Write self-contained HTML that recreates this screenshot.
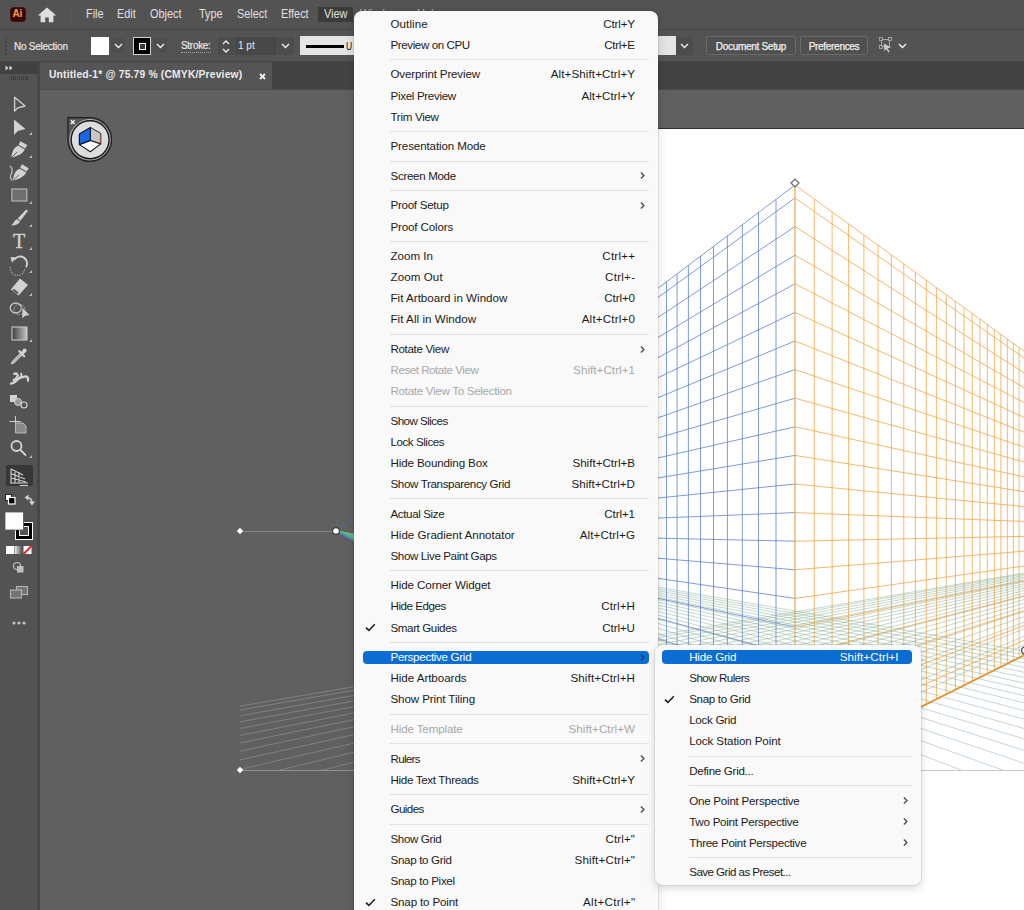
<!DOCTYPE html>
<html><head><meta charset="utf-8"><title>Illustrator</title>
<style>
*{margin:0;padding:0;box-sizing:border-box}
html,body{width:1024px;height:910px;overflow:hidden;background:#606060}
body{font-family:"Liberation Sans",sans-serif;position:relative;color:#e2e2e2}
.abs{position:absolute}
#menubar{position:absolute;left:0;top:0;width:1024px;height:29px;background:#535353}
#ctrl{position:absolute;left:0;top:29px;width:1024px;height:33px;background:#535353;border-top:1px solid #474747;border-bottom:1px solid #454545}
#tabbar{position:absolute;left:40px;top:62px;width:984px;height:27px;background:#434343}
#tab{position:absolute;left:0px;top:0;width:232px;height:27px;background:#555555}
#tools{position:absolute;left:0;top:62px;width:40px;height:848px;background:#535353;border-right:3px solid #474747}
#canvas{position:absolute;left:40px;top:89px;width:985px;height:821px;background:#606060;border-top:1px solid #4a4a4a}
#artboard{position:absolute;left:600px;top:128px;width:424px;height:782px;background:#ffffff;border-top:1px solid #2e2e2e}
.mb{position:absolute;top:6.5px;font-size:12.5px;color:#e0e0e0;white-space:nowrap;transform:scaleX(.87);transform-origin:0 50%}
.menu{position:absolute;background:#f9f9f9;border-radius:8px;box-shadow:0 3px 10px rgba(0,0,0,.16),0 0 0 1px rgba(0,0,0,.07)}
.mi{position:absolute;font-size:11.6px;line-height:20px;height:20px;color:#1b1b1b;white-space:nowrap}
.mi.dis{color:#a8a8a8}
.mi.selt{color:#ffffff}
.sep{position:absolute;height:1px;background:#e1e1e1}
.selbar{position:absolute;height:13.2px;background:#0b6dd2;border-radius:4px}
.cv{position:absolute;line-height:0}
.cv svg{display:block}
</style></head><body>

<div id="canvas"></div>
<div id="artboard"></div>
<svg class="abs" style="left:0;top:0" width="1024" height="910" viewBox="0 0 1024 910">
<defs>
<clipPath id="cf"><rect x="240" y="500" width="800" height="270"/></clipPath>
<clipPath id="ca"><rect x="600" y="129" width="424" height="781"/></clipPath>
<clipPath id="cd"><rect x="240" y="500" width="360" height="270"/></clipPath>
</defs>
<g clip-path="url(#ca)"><path d="M795.0 185.0L600.0 332.0M795.0 198.0L600.0 339.5M795.0 226.6L600.0 355.9M795.0 255.2L600.0 372.4M795.0 283.8L600.0 388.8M795.0 312.4L600.0 405.3M795.0 341.0L600.0 421.7M795.0 369.6L600.0 438.2M795.0 398.2L600.0 454.6M795.0 426.8L600.0 471.1M795.0 455.4L600.0 487.5M795.0 484.0L600.0 504.0M795.0 512.6L600.0 520.4M795.0 541.2L600.0 536.9M795.0 569.8L600.0 553.3M795.0 598.4L600.0 569.8M795.0 627.0L600.0 586.2M795.0 655.6L600.0 602.7M795.0 684.2L600.0 619.1M795.0 712.8L600.0 635.6M795.0 741.4L600.0 652.0M795.0 770.0L600.0 668.5M776.0 199.3L776.0 760.1M758.5 212.5L758.5 751.0M742.3 224.7L742.3 742.6M727.4 236.0L727.4 734.8M713.5 246.5L713.5 727.5M700.5 256.2L700.5 720.8M688.4 265.3L688.4 714.5M677.1 273.9L677.1 708.6M666.5 281.9L666.5 703.1M656.5 289.4L656.5 697.9M647.1 296.5L647.1 693.0M638.3 303.1L638.3 688.4M629.9 309.4L629.9 684.0M622.0 315.4L622.0 679.9M614.5 321.0L614.5 676.0M607.4 326.4L607.4 672.3M600.6 331.5L600.6 668.8" stroke="#5f82d2" stroke-width="1" fill="none" opacity="0.8"/>
<path d="M795.0 185.0L1030.0 355.5M795.0 198.0L1030.0 362.1M795.0 226.6L1030.0 376.6M795.0 255.2L1030.0 391.1M795.0 283.8L1030.0 405.6M795.0 312.4L1030.0 420.1M795.0 341.0L1030.0 434.6M795.0 369.6L1030.0 449.1M795.0 398.2L1030.0 463.6M795.0 426.8L1030.0 478.1M795.0 455.4L1030.0 492.6M795.0 484.0L1030.0 507.2M795.0 512.6L1030.0 521.7M795.0 541.2L1030.0 536.2M795.0 569.8L1030.0 550.7M795.0 598.4L1030.0 565.2M795.0 627.0L1030.0 579.7M795.0 655.6L1030.0 594.2M795.0 684.2L1030.0 608.7M795.0 712.8L1030.0 623.2M795.0 741.4L1030.0 637.7M795.0 770.0L1030.0 652.3M814.3 199.0L814.3 760.3M832.1 211.9L832.1 751.4M848.6 223.9L848.6 743.1M863.9 235.0L863.9 735.5M878.1 245.3L878.1 728.4M891.4 254.9L891.4 721.7M903.8 263.9L903.8 715.5M915.4 272.3L915.4 709.7M926.3 280.2L926.3 704.2M936.6 287.7L936.6 699.1M946.2 294.7L946.2 694.2M955.4 301.3L955.4 689.7M964.0 307.6L964.0 685.3M972.2 313.5L972.2 681.2M979.9 319.1L979.9 677.4M987.3 324.5L987.3 673.7M994.3 329.5L994.3 670.2M1000.9 334.4L1000.9 666.8M1007.3 339.0L1007.3 663.6M1013.3 343.4L1013.3 660.6M1019.1 347.6L1019.1 657.7M1024.6 351.6L1024.6 654.9M1029.9 355.4L1029.9 652.3" stroke="#f2a648" stroke-width="1" fill="none" opacity="0.8"/>
<path d="M795.0 185.0L795.0 770.0" stroke="#eea040" stroke-width="1.1" fill="none"/>
<path d="M795.0 770.0L1030.0 652.3" stroke="#ea9226" stroke-width="1.7" fill="none"/>
<path d="M795.0 770.0L600.0 668.5" stroke="#4d74cc" stroke-width="1.5" fill="none"/></g>
<g clip-path="url(#ca)"><g clip-path="url(#cf)"><path d="M240.0 706.1L1272.0 531.0M240.0 1005.4L1272.0 531.0M240.0 969.3L1272.0 531.0M240.0 938.2L1272.0 531.0M240.0 911.3L1272.0 531.0M240.0 887.7L1272.0 531.0M240.0 866.8L1272.0 531.0M240.0 848.3L1272.0 531.0M240.0 831.7L1272.0 531.0M240.0 816.8L1272.0 531.0M240.0 803.2L1272.0 531.0M240.0 790.9L1272.0 531.0M240.0 779.7L1272.0 531.0M240.0 769.4L1272.0 531.0M240.0 759.9L1272.0 531.0M240.0 751.1L1272.0 531.0M240.0 743.0L1272.0 531.0M240.0 735.5L1272.0 531.0M240.0 728.4L1272.0 531.0M240.0 721.9L1272.0 531.0M240.0 715.8L1272.0 531.0M240.0 710.0L1272.0 531.0M336.0 531.0L1707.0 770.0M336.0 531.0L836.5 770.0M336.0 531.0L878.0 770.0M336.0 531.0L919.5 770.0M336.0 531.0L961.0 770.0M336.0 531.0L1002.5 770.0M336.0 531.0L1044.0 770.0M336.0 531.0L1085.5 770.0M336.0 531.0L1127.0 770.0M336.0 531.0L1168.5 770.0M336.0 531.0L1210.0 770.0M336.0 531.0L1251.5 770.0M336.0 531.0L1293.0 770.0M336.0 531.0L1334.5 770.0M336.0 531.0L1376.0 770.0M336.0 531.0L1417.5 770.0M336.0 531.0L1459.0 770.0M336.0 531.0L1500.5 770.0M336.0 531.0L1542.0 770.0M336.0 531.0L1583.5 770.0M336.0 531.0L1625.0 770.0M336.0 531.0L1666.5 770.0" stroke="#88b092" stroke-width="0.9" fill="none" opacity="0.55"/></g></g>
<g clip-path="url(#cd)"><path d="M240.0 706.1L1272.0 531.0M240.0 1005.4L1272.0 531.0M240.0 969.3L1272.0 531.0M240.0 938.2L1272.0 531.0M240.0 911.3L1272.0 531.0M240.0 887.7L1272.0 531.0M240.0 866.8L1272.0 531.0M240.0 848.3L1272.0 531.0M240.0 831.7L1272.0 531.0M240.0 816.8L1272.0 531.0M240.0 803.2L1272.0 531.0M240.0 790.9L1272.0 531.0M240.0 779.7L1272.0 531.0M240.0 769.4L1272.0 531.0M240.0 759.9L1272.0 531.0M240.0 751.1L1272.0 531.0M240.0 743.0L1272.0 531.0M240.0 735.5L1272.0 531.0M240.0 728.4L1272.0 531.0M240.0 721.9L1272.0 531.0M240.0 715.8L1272.0 531.0M240.0 710.0L1272.0 531.0" stroke="#a4b2a4" stroke-width="1" fill="none" opacity="0.42"/>
<path d="M336.0 531.0L1707.0 770.0M336.0 531.0L836.5 770.0M336.0 531.0L878.0 770.0M336.0 531.0L919.5 770.0M336.0 531.0L961.0 770.0M336.0 531.0L1002.5 770.0M336.0 531.0L1044.0 770.0M336.0 531.0L1085.5 770.0M336.0 531.0L1127.0 770.0M336.0 531.0L1168.5 770.0M336.0 531.0L1210.0 770.0M336.0 531.0L1251.5 770.0M336.0 531.0L1293.0 770.0M336.0 531.0L1334.5 770.0M336.0 531.0L1376.0 770.0M336.0 531.0L1417.5 770.0M336.0 531.0L1459.0 770.0M336.0 531.0L1500.5 770.0M336.0 531.0L1542.0 770.0M336.0 531.0L1583.5 770.0M336.0 531.0L1625.0 770.0M336.0 531.0L1666.5 770.0" stroke="#62b87a" stroke-width="1" fill="none" opacity="0.9"/>
<path d="M336.0 531.0L795.0 770.0" stroke="#4a84d0" stroke-width="1.6" fill="none"/>
<path d="M336.0 531.0L795.0 185M336.0 531.0L795.0 198M336.0 531.0L795.0 226M336.0 531.0L795.0 255M336.0 531.0L795.0 284" stroke="#5a78c8" stroke-width="1" fill="none" opacity="0.16"/>
</g>
<path d="M240 531.5L336 531.5" stroke="#858c85" stroke-width="1"/>
<path d="M240 770.5L600 770.5" stroke="#8f968f" stroke-width="1"/>
<path d="M600 770.5L1024 770.5" stroke="#c4ccc4" stroke-width="1"/>
<path d="M236.8 531L240 527.8L243.2 531L240 534.2Z" fill="#ffffff"/>
<path d="M236.8 770L240 766.8L243.2 770L240 773.2Z" fill="#ffffff"/>
<circle cx="336" cy="531" r="3.4" fill="#ffffff" stroke="#3c3c3c" stroke-width="1.2"/>
<path d="M791.0 183L795.0 179L799.0 183L795.0 187Z" fill="#ffffff" stroke="#6a6a6a" stroke-width="1.2"/>
<circle cx="1025" cy="650.5" r="3.4" fill="#ffffff" stroke="#4a4a4a" stroke-width="1.2"/>
</svg>
<!-- ===== menubar ===== -->
<div id="menubar">
  <div class="abs" style="left:9.5px;top:6.5px;width:16px;height:15px;background:#3a0500;border-radius:3.5px;border:1px solid #4a1208"></div>
  <div class="abs" style="left:12.5px;top:9px;font-size:10px;font-weight:bold;color:#f7a050;letter-spacing:-0.2px;line-height:10px">Ai</div>
  <svg class="abs" style="left:37px;top:7px" width="20" height="16" viewBox="0 0 20 16"><path d="M10 0.5L0.8 8.6H3.6V15.3H8.2V10.4H11.8V15.3H16.4V8.6H19.2Z" fill="#dedede"/></svg>
  <div class="abs" style="left:69.5px;top:5px;width:1px;height:19px;background:#5d5d5d"></div>
  <div class="mb" style="left:85.5px">File</div>
  <div class="mb" style="left:117px">Edit</div>
  <div class="mb" style="left:150px">Object</div>
  <div class="mb" style="left:198.5px">Type</div>
  <div class="mb" style="left:236.5px">Select</div>
  <div class="mb" style="left:280.5px">Effect</div>
  <div class="abs" style="left:318px;top:7px;width:35px;height:15px;background:#3b3b3b"></div>
  <div class="mb" style="left:323.5px">View</div>
  <div class="mb" style="left:360px;color:#bdbdbd">Window</div>
  <div class="mb" style="left:417px;color:#bdbdbd">Help</div>
</div>

<!-- ===== control bar ===== -->
<div id="ctrl">
  <div class="abs" style="left:5px;top:7px;width:2px;height:18px;border-left:2px dotted #474747"></div>
  <div class="abs" style="left:14px;top:11px;font-size:10px;color:#e6e6e6;letter-spacing:-0.25px;-webkit-text-stroke:0.2px #e6e6e6">No Selection</div>
  <div class="abs" style="left:91px;top:7px;width:18px;height:18px;background:#ffffff"></div>
  <div class="abs" style="left:111px;top:8px;width:14px;height:15px;background:#4e4e4e;border-radius:2px"></div>
  <svg class="abs" style="left:114px;top:13px" width="9" height="6" viewBox="0 0 9 6"><path d="M1 1L4.5 4.5L8 1" fill="none" stroke="#f0f0f0" stroke-width="1.4"/></svg>
  <div class="abs" style="left:133px;top:7px;width:18px;height:18px;background:#000000;border:1px solid #d0d0d0"></div>
  <div class="abs" style="left:139px;top:13px;width:7px;height:7px;border:1.5px solid #ffffff;background:#3a3a3a"></div>
  <div class="abs" style="left:153px;top:8px;width:14px;height:15px;background:#4e4e4e;border-radius:2px"></div>
  <svg class="abs" style="left:156px;top:13px" width="9" height="6" viewBox="0 0 9 6"><path d="M1 1L4.5 4.5L8 1" fill="none" stroke="#f0f0f0" stroke-width="1.4"/></svg>
  <div class="abs" style="left:181px;top:10px;font-size:10px;color:#e6e6e6;letter-spacing:-0.3px;border-bottom:1px dotted #a0a0a0;line-height:12px;-webkit-text-stroke:0.2px #e6e6e6">Stroke:</div>
  <div class="abs" style="left:218px;top:7px;width:16px;height:18px;background:#4c4c4c"></div>
  <svg class="abs" style="left:222px;top:9px" width="8" height="15" viewBox="0 0 8 15"><path d="M1 5L4 2L7 5M1 10L4 13L7 10" fill="none" stroke="#f0f0f0" stroke-width="1.3"/></svg>
  <div class="abs" style="left:235px;top:7px;width:42px;height:18px;background:#484848"></div>
  <div class="abs" style="left:238px;top:10px;font-size:10px;color:#e8e8e8">1 pt</div>
  <div class="abs" style="left:278px;top:7px;width:16px;height:18px;background:#4c4c4c"></div>
  <svg class="abs" style="left:281px;top:13px" width="9" height="6" viewBox="0 0 9 6"><path d="M1 1L4.5 4.5L8 1" fill="none" stroke="#f0f0f0" stroke-width="1.4"/></svg>
  <div class="abs" style="left:300px;top:6px;width:376px;height:19px;background:#e4e4e4"></div>
  <div class="abs" style="left:306px;top:15px;width:38px;height:3px;background:#000000"></div>
  <div class="abs" style="left:346px;top:10.5px;font-size:10px;color:#111;transform:scaleX(.85);transform-origin:0 50%">U</div>
  <div class="abs" style="left:676px;top:7px;width:17px;height:18px;background:#4c4c4c"></div>
  <svg class="abs" style="left:680px;top:13px" width="9" height="6" viewBox="0 0 9 6"><path d="M1 1L4.5 4.5L8 1" fill="none" stroke="#f0f0f0" stroke-width="1.4"/></svg>
  <div class="abs" style="left:706px;top:6px;width:90px;height:19px;border:1px solid #6a6a6a;border-radius:2px;background:#505050;font-size:10px;color:#f0f0f0;text-align:center;line-height:19px;letter-spacing:-0.3px;-webkit-text-stroke:0.25px #f0f0f0">Document Setup</div>
  <div class="abs" style="left:800px;top:6px;width:68px;height:19px;border:1px solid #6a6a6a;border-radius:2px;background:#505050;font-size:10px;color:#f0f0f0;text-align:center;line-height:19px;letter-spacing:-0.3px;-webkit-text-stroke:0.25px #f0f0f0">Preferences</div>
  <svg class="abs" style="left:876px;top:6px" width="18" height="19" viewBox="0 0 18 19"><rect x="5.500" y="3.500" width="8" height="7" fill="none" stroke="#a9a9a9" stroke-width="1"/><rect x="3.500" y="1.500" width="3" height="3" fill="#535353" stroke="#b4b4b4" stroke-width="0.8"/><rect x="12.500" y="1.500" width="3" height="3" fill="#535353" stroke="#b4b4b4" stroke-width="0.8"/><rect x="3.500" y="9.500" width="3" height="3" fill="#535353" stroke="#b4b4b4" stroke-width="0.8"/><path d="M8 7.500L15 11.500L11.800 12.200L13.600 16L12.200 16.600L10.500 12.900L8.300 15Z" fill="#c9c9c9"/></svg>
  <svg class="abs" style="left:898px;top:13px" width="9" height="6" viewBox="0 0 9 6"><path d="M1 1L4.5 4.5L8 1" fill="none" stroke="#f0f0f0" stroke-width="1.4"/></svg>
</div>

<!-- ===== tab bar ===== -->
<div id="tabbar">
  <div id="tab">
    <div class="abs" style="left:9px;top:7px;font-size:10.3px;font-weight:bold;color:#ececec;letter-spacing:0.18px;white-space:nowrap">Untitled-1* @ 75.79 % (CMYK/Preview)</div>
    <svg class="abs" style="left:218.500px;top:10.500px" width="7" height="7" viewBox="0 0 7 7"><path d="M1 1L6 6M6 1L1 6" stroke="#f0f0f0" stroke-width="1.8"/></svg>
  </div>
</div>

<!-- ===== toolbar ===== -->
<div id="tools">
  <div class="abs" style="left:0;top:0;width:38px;height:12px;background:#414141"></div>
  <svg class="abs" style="left:5px;top:3px" width="9" height="6" viewBox="0 0 9 6"><path d="M0.5 0.5L3.5 3L0.5 5.5ZM4.5 0.5L7.5 3L4.5 5.5Z" fill="#d8d8d8"/></svg>
  <div class="abs" style="left:11px;top:14px;width:18px;height:4px;background:repeating-linear-gradient(90deg,#3d3d3d 0,#3d3d3d 1px,transparent 1px,transparent 2px)"></div>
  <svg class="abs" style="left:0;top:0" width="38" height="848" viewBox="0 62 38 848">
    <g fill="none" stroke="#d2d2d2" stroke-width="1.3" stroke-linejoin="round" stroke-linecap="round">
      <!-- selection (outline arrow) y=104 -->
      <path d="M14.600 97.200L14.600 111L17.800 107.800L25 106Z"/>
    </g>
    <g fill="#d2d2d2">
      <!-- direct selection (filled arrow) y=126 -->
      <path d="M14 119.500L14 135L17.800 131L25.500 129Z"/>
      <path d="M29 135h3v-3z" opacity=".8"/>
      <!-- pen y=149 -->
      <path d="M20.400 141.300L27.200 145L25.300 148.400L18.600 144.700Z"/>
      <path d="M18.200 145.700C15 146.600 12.500 150 11.400 156.600C11.300 157.300 11.900 157.600 12.500 157.300C18.500 155.600 22.500 153.600 24.900 149.400Z"/>
      <path d="M12 157L17.300 151.800" stroke="#535353" stroke-width="0.9" fill="none"/>
      <path d="M29 158h3v-3z" opacity=".8"/>
      <!-- curvature y=172 -->
      <path d="M22 164.300L28.600 168.200L26.700 171.600L20.100 167.800Z"/>
      <path d="M19.800 168.800C16.500 169.700 14 173 13 179.600C12.900 180.300 13.500 180.600 14.100 180.300C20 178.600 24 176.600 26.300 172.500Z"/>
      <path d="M13.600 180L18.800 174.900" stroke="#535353" stroke-width="0.9" fill="none"/>
      <path d="M9.800 165.800C12.500 168 12.800 171 11.200 174C10 176.500 10.300 179 12.400 180.400" fill="none" stroke="#bdbdbd" stroke-width="1.3"/>
      <!-- rectangle y=195 -->
      <rect x="11.800" y="189" width="15" height="12" fill="#6f6f6f" stroke="#b4b4b4" stroke-width="1.2"/>
      <path d="M29 204h3v-3z" opacity=".8"/>
      <!-- brush y=218 -->
      <path d="M26.200 209.500L27.900 211L20.400 220.800L17.700 218.600Z M17.200 219.300L19.900 221.500C19 224.200 15 225.600 11.200 225.400C13.500 224 14 220.500 17.200 219.300Z"/>
      <path d="M29 227h3v-3z" opacity=".8"/>
    </g>
    <!-- type y=241 -->
    <text x="12.900" y="248.300" font-family="Liberation Serif" font-size="20" fill="#d2d2d2" stroke="#d2d2d2" stroke-width="0.35">T</text>
    <path d="M29 250h3v-3z" fill="#d2d2d2" opacity=".8"/>
    <!-- rotate y=264 -->
    <g fill="none" stroke="#d2d2d2">
      <path d="M14.300 259.600A6.900 6.900 0 0 1 25.900 267.300" stroke-width="1.900"/>
      <path d="M24.800 269.300A6.900 6.900 0 0 1 10.300 266.800" stroke-width="1.200" stroke-dasharray="1.100 1.300" opacity=".8"/>
      <path d="M10.600 257L16.200 257.600L12 262.800Z" fill="#d2d2d2" stroke="none"/>
    </g>
    <path d="M29 273h3v-3z" fill="#d2d2d2" opacity=".8"/>
    <!-- eraser y=287 -->
    <g fill="#d2d2d2">
      <path d="M20 278.500L28 285L18.500 295.500L10.800 289.500Z"/>
      <path d="M13.800 288.700L18.700 292.600L17.300 294.200L12.300 290.300Z" fill="#5a5a5a"/>
      <path d="M29 296h3v-3z" opacity=".8"/>
    </g>
    <!-- shape builder y=310 -->
    <g fill="none" stroke="#c6c6c6" stroke-width="1.300">
      <ellipse cx="15.800" cy="308" rx="5.600" ry="5"/><ellipse cx="19.500" cy="309.500" rx="5.600" ry="5" stroke-dasharray="1.400 1.100" stroke-width="1"/>
      <path d="M22 307.300L22 319L24.800 316.200L30 315.200Z" fill="#d2d2d2" stroke="#535353" stroke-width="0.600"/>
    </g>
    <!-- gradient y=333 -->
    <defs><linearGradient id="gt" x1="0" x2="1"><stop offset="0" stop-color="#3e3e3e"/><stop offset="1" stop-color="#c4c4c4"/></linearGradient><linearGradient id="gt2" x1="0" x2="1"><stop offset="0" stop-color="#f0f0f0"/><stop offset="1" stop-color="#4a4a4a"/></linearGradient></defs>
    <rect x="12" y="327" width="15" height="13" fill="url(#gt)" stroke="#c8c8c8" stroke-width="1.1"/>
    <path d="M29 342h3v-3z" fill="#d2d2d2" opacity=".8"/>
    <!-- eyedropper y=356 -->
    <g fill="none" stroke="#d2d2d2" stroke-linecap="round" stroke-linejoin="round">
      <path d="M20.300 353.800L12.600 361.500L11.600 363.600L13.800 362.700L21.600 355" stroke-width="1.300"/>
      <path d="M19.300 351.300L24.200 356.200" stroke-width="2.300"/>
      <path d="M21.800 353.600L24.800 350.600" stroke-width="3.400"/>
      <circle cx="24.600" cy="350.400" r="1.900" fill="#d2d2d2" stroke="none"/>
    </g>
    <!-- puppet warp y=378 -->
    <g fill="none" stroke="#d2d2d2" stroke-width="2.400" stroke-linecap="round">
      <path d="M11 383.600C14.500 383.300 16.500 380.800 18.500 378.800C20.500 376.800 22.500 377.200 24.500 376.600C27 375.800 28.600 377.800 28 380.600"/>
      <path d="M14.300 373.800C16.800 372.800 18.600 374.800 17.300 377C16.300 378.600 15.300 379.600 13.800 380.200"/>
      <path d="M21 373.500C21.800 374.800 21.500 376 20.500 377" stroke-width="1.800"/>
    </g>
    <!-- symbol sprayer / shape y=401 -->
    <g fill="#d2d2d2">
      <rect x="10" y="395" width="7" height="7"/>
      <circle cx="18" cy="402" r="3.500" fill="#9a9a9a" stroke="#d2d2d2" stroke-width="1"/>
      <circle cx="24" cy="405" r="3" fill="none" stroke="#d2d2d2" stroke-width="1.2"/>
    </g>
    <!-- artboard y=425 -->
    <g fill="none" stroke="#d2d2d2" stroke-width="1">
      <path d="M15.500 416v8M9.500 421.500h11"/>
      <path d="M15.500 423h7.500l3 3v7h-10.500z" fill="#8a8a8a" stroke="#b8b8b8"/>
    </g>
    <!-- zoom y=448 -->
    <g fill="none" stroke="#d2d2d2" stroke-width="1.8" stroke-linecap="round">
      <circle cx="16.500" cy="446" r="5"/>
      <path d="M20.500 450l5 5"/>
    </g>
    <path d="M29 458h3v-3z" fill="#d2d2d2" opacity=".8"/>
    <!-- perspective grid tool (active) y=475 -->
    <rect x="6" y="465" width="27" height="21" rx="2" fill="#383838"/>
    <g fill="none" stroke="#d2d2d2" stroke-width="1.1">
      <path d="M11 469v14M15 470.500v12.500M19 472v11M11 469l12 6M11 473.500l14 5.500M11 478l15 4M10 483h18M20 485.500h8"/>
    </g>
    <!-- default fill/stroke + swap y=500 -->
    <rect x="5.500" y="494.500" width="6" height="6" fill="#ffffff" stroke="#222" stroke-width="1"/>
    <rect x="8.500" y="497.500" width="6.500" height="6.500" fill="#000" stroke="#fff" stroke-width="1.2"/>
    <path d="M26.500 497.500c3.500 0 5.500 2 5.500 5.500" fill="none" stroke="#d2d2d2" stroke-width="1.4"/><path d="M24.500 497.500l4-3v6zM32 505.500l-3-4h6z" fill="#d2d2d2"/>
    <!-- fill / stroke swatches -->
    <rect x="15.500" y="522.500" width="17" height="17" fill="#000000" stroke="#ffffff" stroke-width="1"/>
    <rect x="19.500" y="526.500" width="9" height="9" fill="#535353" stroke="#ffffff" stroke-width="1"/>
    <rect x="5" y="512" width="18.500" height="18" fill="#ffffff" stroke="#535353" stroke-width="0.8"/>
    <!-- colour / gradient / none -->
    <rect x="6" y="546" width="8" height="8" fill="#ffffff"/>
    <rect x="14.500" y="546" width="8" height="8" fill="url(#gt2)"/>
    <rect x="23.500" y="546" width="8" height="8" fill="#ffffff"/>
    <path d="M23.500 554l8-8" stroke="#e02020" stroke-width="1.8"/>
    <!-- draw mode y=568 -->
    <g fill="#bdbdbd">
      <circle cx="17" cy="566" r="3.500" fill="none" stroke="#bdbdbd" stroke-width="1.2"/>
      <rect x="17" y="566" width="6.500" height="6.500"/>
    </g>
    <!-- screen mode y=592 -->
    <g fill="#747474" stroke="#b4b4b4" stroke-width="1.1">
      <rect x="16.500" y="586.500" width="11" height="8"/>
      <rect x="10.500" y="590" width="11" height="8"/>
    </g>
    <!-- more -->
    <g fill="#c4c4c4"><circle cx="14" cy="623" r="1.600"/><circle cx="19" cy="623" r="1.600"/><circle cx="24" cy="623" r="1.600"/></g>
  </svg>
</div>

<!-- ===== plane switching widget ===== -->
<svg class="abs" style="left:64px;top:114px" width="52" height="52" viewBox="0 0 52 52">
  <path d="M3.900 3.700H25.800A21.850 21.850 0 1 1 3.900 25.600Z" fill="#585858" stroke="#1e1e1e" stroke-width="1.2"/>
  <circle cx="26" cy="25.700" r="20.600" fill="#b9b9b9"/>
  <circle cx="26.100" cy="25.700" r="19.700" fill="#161616"/>
  <circle cx="26.100" cy="25.700" r="18.300" fill="#dddddd"/>
  <path d="M26.300 13.400L36.800 19.400V29.900L26.300 26.400Z" fill="#c6c6c6" stroke="#2a2a2a" stroke-width="1" stroke-linejoin="round"/>
  <path d="M36.400 24V29.600L31 27.800" stroke="#b04838" stroke-width="0.7" fill="none"/>
  <path d="M26.300 26.400L36.800 29.900L26.300 37.700L15.400 30.600Z" fill="#ffffff" stroke="#1a1a1a" stroke-width="1.1" stroke-linejoin="round"/>
  <path d="M26.300 13.400L15.400 20V30.600L26.300 26.400Z" fill="#1a68e6" stroke="#10182a" stroke-width="1.2" stroke-linejoin="round"/>
  <path d="M6.900 6.300l3.700 3.700M10.600 6.300l-3.700 3.700" stroke="#f4f4f4" stroke-width="1.4"/>
</svg>

<div class="menu" style="left:354px;top:10.5px;width:303.5px;height:920px">
<div class="mi" style="top:3.30px;left:36.5px;letter-spacing:0.078px">Outline</div>
<div class="mi sc" style="top:3.30px;left:249.3px;letter-spacing:-0.169px">Ctrl+Y</div>
<div class="mi" style="top:24.37px;left:36.5px;letter-spacing:-0.412px">Preview on CPU</div>
<div class="mi sc" style="top:24.37px;left:250.3px;letter-spacing:-0.369px">Ctrl+E</div>
<div class="sep" style="left:36px;width:259px;top:48.7px"></div>
<div class="mi" style="top:53.99px;left:36.5px;letter-spacing:-0.159px">Overprint Preview</div>
<div class="mi sc" style="top:53.99px;left:196.8px;letter-spacing:0.093px">Alt+Shift+Ctrl+Y</div>
<div class="mi" style="top:75.06px;left:36.5px;letter-spacing:-0.324px">Pixel Preview</div>
<div class="mi sc" style="top:75.06px;left:227.4px;letter-spacing:0.084px">Alt+Ctrl+Y</div>
<div class="mi" style="top:96.13px;left:36.5px;letter-spacing:-0.299px">Trim View</div>
<div class="sep" style="left:36px;width:259px;top:120.4px"></div>
<div class="mi" style="top:125.75px;left:36.5px;letter-spacing:-0.127px">Presentation Mode</div>
<div class="sep" style="left:36px;width:259px;top:150.1px"></div>
<div class="mi" style="top:155.37px;left:36.5px;letter-spacing:-0.327px">Screen Mode</div>
<div class="cv" style="top:161.87px;left:285.7px"><svg class="chev" width="5" height="7" viewBox="0 0 5 7"><path d="M0.9 0.6L3.9 3.5L0.9 6.4" fill="none" stroke="#4a4a4a" stroke-width="1.35"/></svg></div>
<div class="sep" style="left:36px;width:259px;top:179.7px"></div>
<div class="mi" style="top:184.99px;left:36.5px;letter-spacing:-0.283px">Proof Setup</div>
<div class="cv" style="top:191.49px;left:285.7px"><svg class="chev" width="5" height="7" viewBox="0 0 5 7"><path d="M0.9 0.6L3.9 3.5L0.9 6.4" fill="none" stroke="#4a4a4a" stroke-width="1.35"/></svg></div>
<div class="mi" style="top:206.06px;left:36.5px;letter-spacing:-0.158px">Proof Colors</div>
<div class="sep" style="left:36px;width:259px;top:230.4px"></div>
<div class="mi" style="top:235.68px;left:36.5px;letter-spacing:-0.005px">Zoom In</div>
<div class="mi sc" style="top:235.68px;left:248.3px;letter-spacing:0.224px">Ctrl++</div>
<div class="mi" style="top:256.75px;left:36.5px;letter-spacing:0.079px">Zoom Out</div>
<div class="mi sc" style="top:256.75px;left:251.0px;letter-spacing:0.266px">Ctrl+-</div>
<div class="mi" style="top:277.82px;left:36.5px;letter-spacing:0.012px">Fit Artboard in Window</div>
<div class="mi sc" style="top:277.82px;left:250.3px;letter-spacing:-0.110px">Ctrl+0</div>
<div class="mi" style="top:298.89px;left:36.5px;letter-spacing:0.041px">Fit All in Window</div>
<div class="mi sc" style="top:298.89px;left:227.7px;letter-spacing:0.193px">Alt+Ctrl+0</div>
<div class="sep" style="left:36px;width:259px;top:323.2px"></div>
<div class="mi" style="top:328.51px;left:36.5px;letter-spacing:-0.351px">Rotate View</div>
<div class="cv" style="top:335.01px;left:285.7px"><svg class="chev" width="5" height="7" viewBox="0 0 5 7"><path d="M0.9 0.6L3.9 3.5L0.9 6.4" fill="none" stroke="#4a4a4a" stroke-width="1.35"/></svg></div>
<div class="mi dis" style="top:349.58px;left:36.5px;letter-spacing:-0.470px">Reset Rotate View</div>
<div class="mi dis sc" style="top:349.58px;left:219.1px;letter-spacing:0.062px">Shift+Ctrl+1</div>
<div class="mi dis" style="top:370.65px;left:36.5px;letter-spacing:-0.304px">Rotate View To Selection</div>
<div class="sep" style="left:36px;width:259px;top:395.0px"></div>
<div class="mi" style="top:400.27px;left:36.5px;letter-spacing:-0.536px">Show Slices</div>
<div class="mi" style="top:421.34px;left:36.5px;letter-spacing:-0.454px">Lock Slices</div>
<div class="mi" style="top:442.41px;left:36.5px;letter-spacing:-0.123px">Hide Bounding Box</div>
<div class="mi sc" style="top:442.41px;left:218.4px;letter-spacing:0.008px">Shift+Ctrl+B</div>
<div class="mi" style="top:463.48px;left:36.5px;letter-spacing:-0.366px">Show Transparency Grid</div>
<div class="mi sc" style="top:463.48px;left:217.4px;letter-spacing:0.040px">Shift+Ctrl+D</div>
<div class="sep" style="left:36px;width:259px;top:487.8px"></div>
<div class="mi" style="top:493.10px;left:36.5px;letter-spacing:-0.390px">Actual Size</div>
<div class="mi sc" style="top:493.10px;left:250.3px;letter-spacing:-0.110px">Ctrl+1</div>
<div class="mi" style="top:514.17px;left:36.5px;letter-spacing:-0.009px">Hide Gradient Annotator</div>
<div class="mi sc" style="top:514.17px;left:225.7px;letter-spacing:0.131px">Alt+Ctrl+G</div>
<div class="mi" style="top:535.24px;left:36.5px;letter-spacing:-0.394px">Show Live Paint Gaps</div>
<div class="sep" style="left:36px;width:259px;top:559.6px"></div>
<div class="mi" style="top:564.86px;left:36.5px;letter-spacing:-0.107px">Hide Corner Widget</div>
<div class="mi" style="top:585.93px;left:36.5px;letter-spacing:-0.473px">Hide Edges</div>
<div class="mi sc" style="top:585.93px;left:247.2px;letter-spacing:0.122px">Ctrl+H</div>
<div class="mi" style="top:607.00px;left:36.5px;letter-spacing:-0.399px">Smart Guides</div>
<div class="mi sc" style="top:607.00px;left:248.3px;letter-spacing:-0.097px">Ctrl+U</div>
<div class="cv" style="top:612.50px;left:11px"><svg class="chk" width="11" height="9" viewBox="0 0 11 9"><path d="M1 4.6L3.9 7.4L9.8 1.2" fill="none" stroke="#1b1b1b" stroke-width="1.5"/></svg></div>
<div class="sep" style="left:36px;width:259px;top:631.3px"></div>
<div class="selbar" style="left:9px;width:286px;top:640.02px"></div>
<div class="mi selt" style="top:636.62px;left:36.5px;letter-spacing:-0.307px">Perspective Grid</div>
<div class="cv" style="top:643.12px;left:285.7px"><svg class="chev" width="5" height="7" viewBox="0 0 5 7"><path d="M0.9 0.6L3.9 3.5L0.9 6.4" fill="none" stroke="#1d3f73" stroke-width="1.35"/></svg></div>
<div class="mi" style="top:657.69px;left:36.5px;letter-spacing:-0.046px">Hide Artboards</div>
<div class="mi sc" style="top:657.69px;left:216.4px;letter-spacing:0.131px">Shift+Ctrl+H</div>
<div class="mi" style="top:678.76px;left:36.5px;letter-spacing:-0.110px">Show Print Tiling</div>
<div class="sep" style="left:36px;width:259px;top:703.1px"></div>
<div class="mi dis" style="top:708.38px;left:36.5px;letter-spacing:-0.134px">Hide Template</div>
<div class="mi dis sc" style="top:708.38px;left:214.5px;letter-spacing:0.071px">Shift+Ctrl+W</div>
<div class="sep" style="left:36px;width:259px;top:732.7px"></div>
<div class="mi" style="top:738.00px;left:36.5px;letter-spacing:-0.703px">Rulers</div>
<div class="cv" style="top:744.50px;left:285.7px"><svg class="chev" width="5" height="7" viewBox="0 0 5 7"><path d="M0.9 0.6L3.9 3.5L0.9 6.4" fill="none" stroke="#4a4a4a" stroke-width="1.35"/></svg></div>
<div class="mi" style="top:759.07px;left:36.5px;letter-spacing:-0.329px">Hide Text Threads</div>
<div class="mi sc" style="top:759.07px;left:218.3px;letter-spacing:0.017px">Shift+Ctrl+Y</div>
<div class="sep" style="left:36px;width:259px;top:783.4px"></div>
<div class="mi" style="top:788.69px;left:36.5px;letter-spacing:-0.587px">Guides</div>
<div class="cv" style="top:795.19px;left:285.7px"><svg class="chev" width="5" height="7" viewBox="0 0 5 7"><path d="M0.9 0.6L3.9 3.5L0.9 6.4" fill="none" stroke="#4a4a4a" stroke-width="1.35"/></svg></div>
<div class="sep" style="left:36px;width:259px;top:813.0px"></div>
<div class="mi" style="top:818.31px;left:36.5px;letter-spacing:-0.378px">Show Grid</div>
<div class="mi sc" style="top:818.31px;left:251.4px;letter-spacing:0.136px">Ctrl+&quot;</div>
<div class="mi" style="top:839.38px;left:36.5px;letter-spacing:-0.327px">Snap to Grid</div>
<div class="mi sc" style="top:839.38px;left:220.6px;letter-spacing:0.137px">Shift+Ctrl+&quot;</div>
<div class="mi" style="top:860.45px;left:36.5px;letter-spacing:-0.311px">Snap to Pixel</div>
<div class="mi" style="top:881.52px;left:36.5px;letter-spacing:-0.160px">Snap to Point</div>
<div class="mi sc" style="top:881.52px;left:229.1px;letter-spacing:0.298px">Alt+Ctrl+&quot;</div>
<div class="cv" style="top:887.02px;left:11px"><svg class="chk" width="11" height="9" viewBox="0 0 11 9"><path d="M1 4.6L3.9 7.4L9.8 1.2" fill="none" stroke="#1b1b1b" stroke-width="1.5"/></svg></div>
</div>
<div class="menu" style="left:654.5px;top:644.5px;width:266.29999999999995px;height:240px">
<div class="selbar" style="left:7.5px;width:250px;top:5.90px"></div>
<div class="mi selt" style="top:2.50px;left:34.700000000000045px;letter-spacing:-0.221px">Hide Grid</div>
<div class="mi selt sc" style="top:2.50px;left:185.3px;letter-spacing:0.073px">Shift+Ctrl+I</div>
<div class="mi" style="top:23.57px;left:34.700000000000045px;letter-spacing:-0.503px">Show Rulers</div>
<div class="mi" style="top:44.64px;left:34.700000000000045px;letter-spacing:-0.327px">Snap to Grid</div>
<div class="cv" style="top:50.14px;left:9.5px"><svg class="chk" width="11" height="9" viewBox="0 0 11 9"><path d="M1 4.6L3.9 7.4L9.8 1.2" fill="none" stroke="#1b1b1b" stroke-width="1.5"/></svg></div>
<div class="mi" style="top:65.71px;left:34.700000000000045px;letter-spacing:-0.303px">Lock Grid</div>
<div class="mi" style="top:86.78px;left:34.700000000000045px;letter-spacing:-0.115px">Lock Station Point</div>
<div class="sep" style="left:34.5px;width:223px;top:111.1px"></div>
<div class="mi" style="top:116.40px;left:34.700000000000045px;letter-spacing:-0.293px">Define Grid...</div>
<div class="sep" style="left:34.5px;width:223px;top:140.7px"></div>
<div class="mi" style="top:146.02px;left:34.700000000000045px;letter-spacing:-0.238px">One Point Perspective</div>
<div class="cv" style="top:152.52px;left:248.2px"><svg class="chev" width="5" height="7" viewBox="0 0 5 7"><path d="M0.9 0.6L3.9 3.5L0.9 6.4" fill="none" stroke="#4a4a4a" stroke-width="1.35"/></svg></div>
<div class="mi" style="top:167.09px;left:34.700000000000045px;letter-spacing:-0.260px">Two Point Perspective</div>
<div class="cv" style="top:173.59px;left:248.2px"><svg class="chev" width="5" height="7" viewBox="0 0 5 7"><path d="M0.9 0.6L3.9 3.5L0.9 6.4" fill="none" stroke="#4a4a4a" stroke-width="1.35"/></svg></div>
<div class="mi" style="top:188.16px;left:34.700000000000045px;letter-spacing:-0.288px">Three Point Perspective</div>
<div class="cv" style="top:194.66px;left:248.2px"><svg class="chev" width="5" height="7" viewBox="0 0 5 7"><path d="M0.9 0.6L3.9 3.5L0.9 6.4" fill="none" stroke="#4a4a4a" stroke-width="1.35"/></svg></div>
<div class="sep" style="left:34.5px;width:223px;top:212.5px"></div>
<div class="mi" style="top:217.78px;left:34.700000000000045px;letter-spacing:-0.544px">Save Grid as Preset...</div>
</div>
</body></html>
